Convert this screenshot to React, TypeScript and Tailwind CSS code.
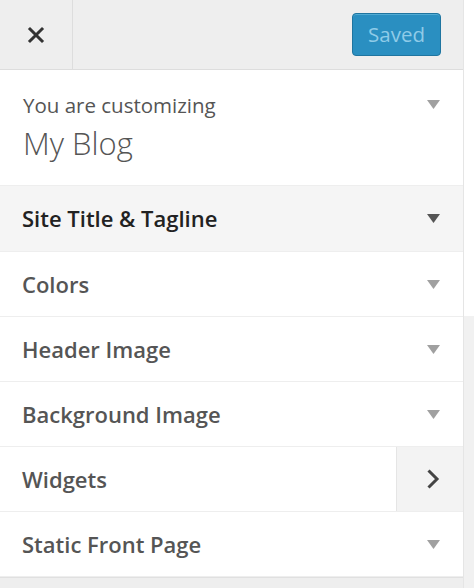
const sections = [
  { title: "Colors" },
  { title: "Header Image" },
  { title: "Background Image" },
  { title: "Widgets", panel: true },
  { title: "Static Front Page" },
];

// 小さい下向き三角
function Arrow({ dark }: { dark?: boolean }) {
  return (
    <svg width="13" height="9" viewBox="0 0 13 9" className={dark ? "text-[#555]" : "text-[#a0a0a0]"}>
      <polygon points="0,0 13,0 6.5,9" fill="currentColor" />
    </svg>
  );
}

export default function App() {
  return (
    <div className="w-[474px] h-[588px] overflow-hidden bg-[#f1f1f1] flex font-['Open_Sans',sans-serif]">
      <div className="w-[464px] flex flex-col bg-white border-r border-[#e5e5e5]">
        {/* ヘッダー */}
        <header className="h-[70px] shrink-0 flex items-center bg-[#eeeeee] border-b border-[#dddddd]">
          <button className="w-[73px] h-full flex items-center justify-center border-r border-[#dddddd] text-[#333]">
            <svg width="18" height="18" viewBox="0 0 18 18">
              <path d="M3 3 L15 15 M15 3 L3 15" stroke="currentColor" strokeWidth="3" strokeLinecap="square" />
            </svg>
          </button>
          <div className="flex-1" />
          <button className="mr-[22px] w-[89px] h-[43px] rounded-[4px] bg-[#2a8fc1] border border-[#1f75a0] text-[#8fcbe8] text-[20.5px] leading-none shadow-[inset_0_1px_0_rgba(120,200,230,0.5)]">
            Saved
          </button>
        </header>

        {/* テーマ情報 */}
        <div className="h-[116px] shrink-0 relative px-[23px] pt-[22px] border-b border-[#eeeeee]">
          <div className="text-[20.5px] leading-[26px] text-[#555]">You are customizing</div>
          <div className="text-[31px] leading-[38px] font-light text-[#555] mt-[6px]">My Blog</div>
          <div className="absolute right-[23px] top-[30px]">
            <Arrow />
          </div>
        </div>

        {/* セクション */}
        <div className="h-[66px] shrink-0 flex items-center justify-between pl-[22px] pr-[23px] bg-[#f5f5f5] border-b border-[#eeeeee]">
          <span className="text-[22px] font-semibold text-[#222]">Site Title &amp; Tagline</span>
          <Arrow dark />
        </div>
        {sections.map(s => (
          <div key={s.title} className="h-[65px] shrink-0 flex items-center justify-between border-b border-[#eeeeee]">
            <span className="pl-[22px] text-[22px] font-semibold text-[#555]">{s.title}</span>
            {s.panel ? (
              <div className="w-[67px] h-full flex items-center justify-end pr-[23px] bg-[#f3f3f3] border-l border-[#e5e5e5] text-[#444]">
                <svg width="14" height="22" viewBox="0 0 14 22">
                  <path d="M2.5 2.5 L11 11 L2.5 19.5" fill="none" stroke="currentColor" strokeWidth="3" />
                </svg>
              </div>
            ) : (
              <div className="pr-[23px]">
                <Arrow />
              </div>
            )}
          </div>
        ))}
        <div className="flex-1 bg-[#eeeeee] border-t border-[#e0e0e0]" />
      </div>
      <div className="flex-1 flex flex-col">
        <div className="h-[316px] bg-white" />
        <div className="flex-1 bg-[#f1f1f1]" />
      </div>
    </div>
  );
}
